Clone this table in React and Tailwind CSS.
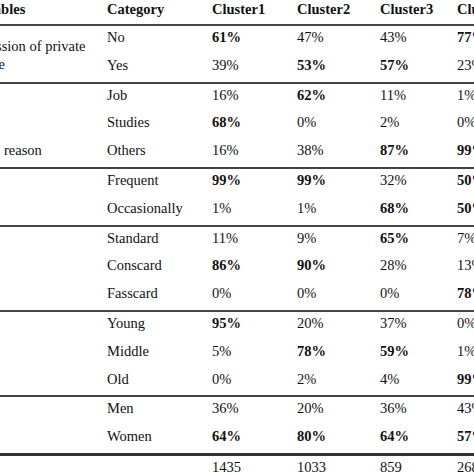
import React from "react";

// values marked with * are printed bold
const groups = [
  {
    label: ["Possession of private", "vehicle"],
    labelClass: "pt-[11px] leading-[18px]",
    rows: [
      ["No", "61%*", "47%", "43%", "77%*"],
      ["Yes", "39%", "53%*", "57%*", "23%"],
    ],
  },
  {
    label: ["Travel reason"],
    labelClass: "pt-[55px] leading-[22px]",
    rows: [
      ["Job", "16%", "62%*", "11%", "1%"],
      ["Studies", "68%*", "0%", "2%", "0%"],
      ["Others", "16%", "38%", "87%*", "99%*"],
    ],
  },
  {
    label: [],
    rows: [
      ["Frequent", "99%*", "99%*", "32%", "50%*"],
      ["Occasionally", "1%", "1%", "68%*", "50%*"],
    ],
  },
  {
    label: [],
    rows: [
      ["Standard", "11%", "9%", "65%*", "7%"],
      ["Conscard", "86%*", "90%*", "28%", "13%"],
      ["Fasscard", "0%", "0%", "0%", "78%*"],
    ],
  },
  {
    label: [],
    rows: [
      ["Young", "95%*", "20%", "37%", "0%"],
      ["Middle", "5%", "78%*", "59%*", "1%"],
      ["Old", "0%", "2%", "4%", "99%*"],
    ],
  },
  {
    label: [],
    rows: [
      ["Men", "36%", "20%", "36%", "43%"],
      ["Women", "64%*", "80%*", "64%*", "57%*"],
    ],
  },
];

const widths = ["w-[105px]", "w-[85px]", "w-[83px]", "w-[77px]", "w-[80px]"];

function Cell({ value, i }) {
  const bold = value.endsWith("*");
  const text = bold ? value.slice(0, -1) : value;
  return (
    <div className={`${widths[i]} shrink-0 whitespace-nowrap ${bold ? "font-bold" : ""}`}>
      {text}
    </div>
  );
}

function Rule({ thick }) {
  return <div className={thick ? "h-[3px] bg-[#333]" : "h-[2px] bg-[#444]"} />;
}

export default function App() {
  return (
    <div
      className="w-[474px] h-[474px] overflow-hidden bg-white text-[#111] text-[14.5px]"
      style={{ fontFamily: '"Liberation Serif", "Times New Roman", serif' }}
    >
      <div className="ml-[-33px] w-[570px]">
        {/* header */}
        <div className="flex h-[24px] leading-[18px] font-bold">
          <div className="w-[140px] shrink-0">Variables</div>
          {["Category", "Cluster1", "Cluster2", "Cluster3", "Cluster4"].map((h, i) => (
            <div key={h} className={`${widths[i]} shrink-0 whitespace-nowrap`}>{h}</div>
          ))}
        </div>
        <Rule />

        {groups.map((g, gi) => (
          <div key={gi}>
            <div className="flex">
              <div className={`w-[140px] shrink-0 ${g.labelClass || ""}`}>
                {g.label.map((l) => (
                  <div key={l} className="whitespace-nowrap ml-[-4px]">{l}</div>
                ))}
              </div>
              <div className="flex flex-col">
                {g.rows.map((r) => (
                  <div key={r[0]} className="flex h-[27.8px] leading-[22px]">
                    {r.map((v, i) => (
                      <Cell key={i} value={v} i={i} />
                    ))}
                  </div>
                ))}
              </div>
            </div>
            <Rule thick={gi === groups.length - 1} />
          </div>
        ))}

        {/* totals */}
        <div className="flex h-[27.8px] leading-[22px]">
          <div className="w-[140px] shrink-0" />
          {["", "1435", "1033", "859", "268"].map((v, i) => (
            <Cell key={i} value={v} i={i} />
          ))}
        </div>
      </div>
    </div>
  );
}
